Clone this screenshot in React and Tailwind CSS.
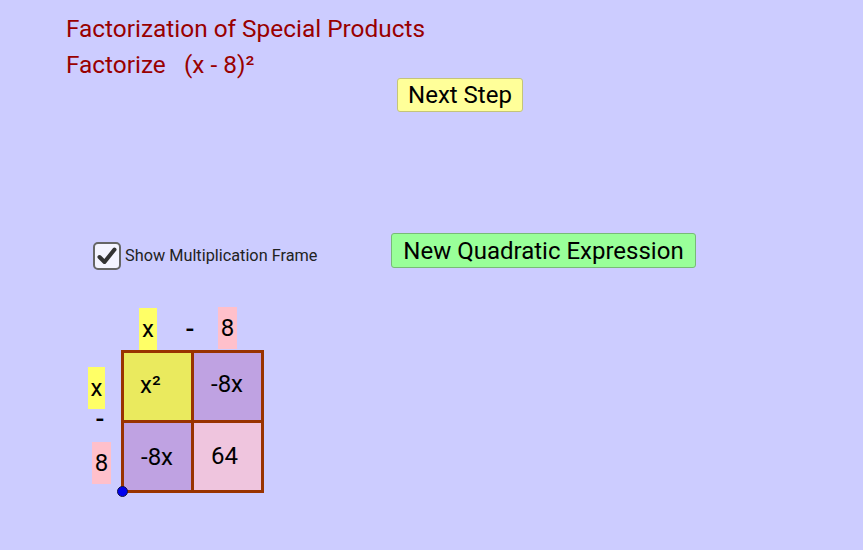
import React from "react";

export default function App() {
  const font = { fontFamily: "Roboto, 'Noto Sans', sans-serif" };
  return (
    <div className="relative w-[863px] h-[550px] overflow-hidden bg-[#ccccff]" style={font}>
      <div className="absolute left-[66px] top-[14px] flex flex-col gap-[6px] text-[24.4px] leading-[30px] text-[#990000] whitespace-nowrap">
        <div>Factorization of Special Products</div>
        <div>Factorize&nbsp;&nbsp;&nbsp;(x - 8)²</div>
      </div>

      <div className="absolute left-[397px] top-[78px] w-[126px] h-[34px] rounded-[3px] border border-[#c4c47a] bg-[#ffff99] flex items-center justify-center text-[24px] text-black">
        Next Step
      </div>

      <div className="absolute left-[391px] top-[233px] w-[305px] h-[35px] rounded-[3px] border border-[#77bb77] bg-[#99ff99] flex items-center justify-center text-[24px] text-black whitespace-nowrap">
        New Quadratic Expression
      </div>

      <div className="absolute left-[93px] top-[242px] flex items-center gap-[4px]">
        <div className="w-[28px] h-[28px] rounded-[5px] border-2 border-[#666666] bg-[#f4f4ff] flex items-center justify-center">
          <svg width="22" height="20" viewBox="0 0 22 20">
            <path d="M3.5 11 L8.5 16 L18.5 3.5" fill="none" stroke="#333333" strokeWidth="4" strokeLinecap="round" strokeLinejoin="round" />
          </svg>
        </div>
        <span className="text-[16.3px] text-[#222222] whitespace-nowrap">Show Multiplication Frame</span>
      </div>

      {/* top labels */}
      <div className="absolute left-[139px] top-[308px] w-[18px] h-[42px] bg-[#ffff66] flex items-center justify-center text-[24px] text-black">x</div>
      <div className="absolute left-[183px] top-[308px] w-[14px] h-[42px] flex items-center justify-center text-[26px] font-medium text-black">-</div>
      <div className="absolute left-[218px] top-[307px] w-[19px] h-[42px] bg-[#ffc0cb] flex items-center justify-center text-[24px] text-black">8</div>

      {/* left labels */}
      <div className="absolute left-[88px] top-[367px] w-[17px] h-[42px] bg-[#ffff66] flex items-center justify-center text-[24px] text-black">x</div>
      <div className="absolute left-[93px] top-[398px] w-[14px] h-[42px] flex items-center justify-center text-[26px] font-medium text-black">-</div>
      <div className="absolute left-[92px] top-[442px] w-[19px] h-[42px] bg-[#ffc0cb] flex items-center justify-center text-[24px] text-black">8</div>

      {/* frame */}
      <div className="absolute left-[121px] top-[350px] grid grid-cols-[67px_67px] grid-rows-[67px_67px] gap-[3px] p-[3px] bg-[#993300] text-[24px] text-black">
        <div className="bg-[#eaea5e] pl-[16px] pt-[18px] leading-[28px]">x²</div>
        <div className="bg-[#bfa2e2] pl-[17px] pt-[17px] leading-[28px]">-8x</div>
        <div className="bg-[#bfa2e2] pl-[17px] pt-[20px] leading-[28px]">-8x</div>
        <div className="bg-[#efc5de] pl-[17px] pt-[19px] leading-[28px]">64</div>
      </div>

      <div className="absolute left-[117px] top-[486px] w-[11px] h-[11px] rounded-full bg-[#0000ee] border-[1.5px] border-[#111144]" />
    </div>
  );
}
